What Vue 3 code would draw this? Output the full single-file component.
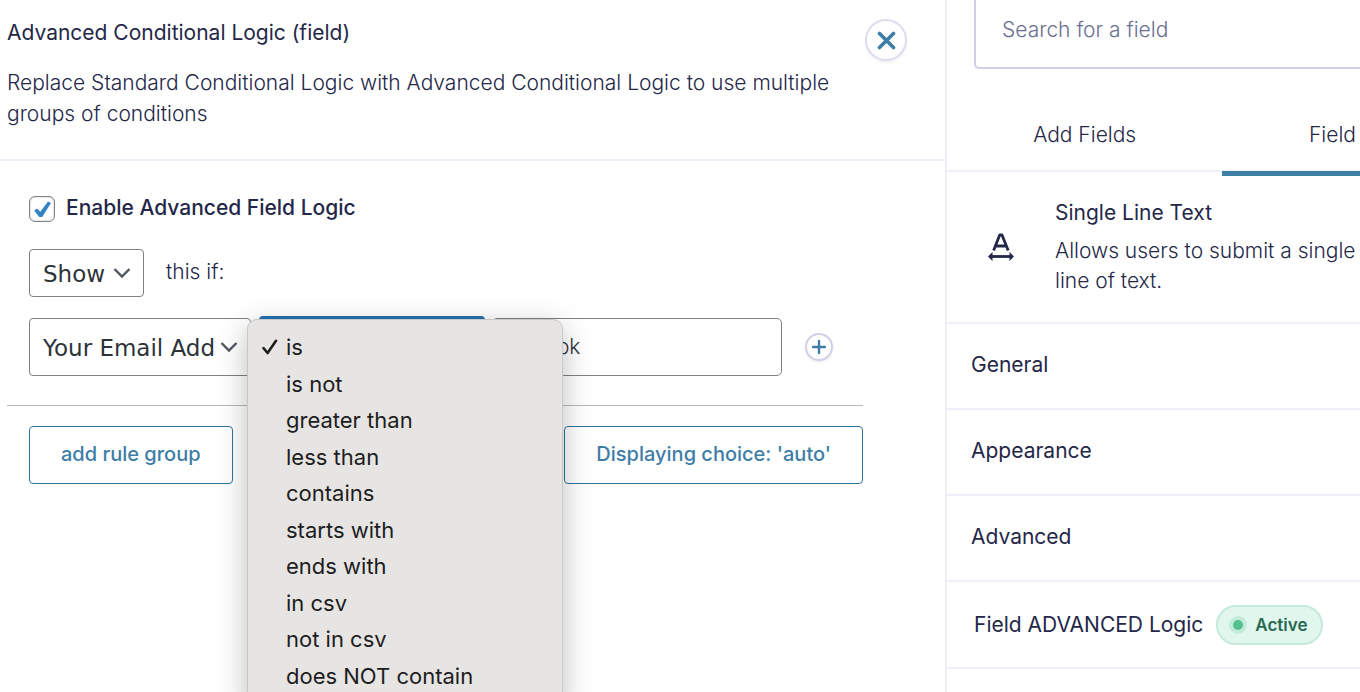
<script setup>
import { ref } from 'vue'

const enabled = ref(true)
const action = ref('Show')
const field = ref('Your Email Add')
const operator = ref('is')
const value = ref('Outlook')
const search = ref('')

const operators = [
  'is',
  'is not',
  'greater than',
  'less than',
  'contains',
  'starts with',
  'ends with',
  'in csv',
  'not in csv',
  'does NOT contain',
]
const sections = ['General', 'Appearance', 'Advanced']
</script>

<template>
  <div class="page">
    <main class="panel">
      <header class="head">
        <div class="intro">
          <h1 class="title">Advanced Conditional Logic (field)</h1>
          <p class="desc">
            Replace Standard Conditional Logic with Advanced Conditional Logic to use multiple groups of conditions
          </p>
        </div>
        <button class="close" type="button" aria-label="Close">
          <svg width="19" height="19" viewBox="0 0 19 19" aria-hidden="true">
            <path d="M2.5 2.5L16.5 16.5M16.5 2.5L2.5 16.5" stroke="#3e7da6" stroke-width="3.6" stroke-linecap="round" />
          </svg>
        </button>
      </header>

      <div class="body">
        <div class="row enable">
          <span class="tick">
            <input id="enable" v-model="enabled" class="box" type="checkbox" />
            <svg v-if="enabled" class="mark" width="19" height="19" viewBox="0 0 19 19" aria-hidden="true">
              <path d="M1.2 10.6L4 8.4L7.3 11.8L15 1.6L18 3L9.2 17H6.2Z" fill="#3582c4" />
            </svg>
          </span>
          <label class="enable-label" for="enable">Enable Advanced Field Logic</label>
        </div>

        <div class="row show">
          <span class="picker action">
            <select id="action" v-model="action" class="select">
              <option>Show</option>
              <option>Hide</option>
            </select>
            <svg class="chevron" width="18" height="12" viewBox="0 0 18 12" aria-hidden="true">
              <path d="M1.5 2L9 9.5L16.5 2" fill="none" stroke="#50575e" stroke-width="2.4" />
            </svg>
          </span>
          <label class="if" for="action">this if:</label>
        </div>

        <div class="row rule">
          <span class="picker field">
            <select v-model="field" class="select" aria-label="Field">
              <option>Your Email Add</option>
            </select>
            <svg class="chevron" width="18" height="12" viewBox="0 0 18 12" aria-hidden="true">
              <path d="M1.5 2L9 9.5L16.5 2" fill="none" stroke="#50575e" stroke-width="2.4" />
            </svg>
          </span>
          <span class="picker operator">
            <select v-model="operator" class="select open" aria-label="Operator">
              <option v-for="o in operators" :key="o">{{ o }}</option>
            </select>
            <ul class="menu" role="listbox" aria-label="Operator">
              <li
                v-for="o in operators"
                :key="o"
                class="option"
                role="option"
                :aria-selected="o === operator"
                @click="operator = o"
              >
                <svg v-if="o === operator" class="check" width="16" height="16" viewBox="0 0 16 16" aria-hidden="true">
                  <path
                    d="M1.5 9.2L5.6 14L14 1.8"
                    fill="none"
                    stroke="#1d1d1d"
                    stroke-width="2.6"
                    stroke-linecap="round"
                    stroke-linejoin="round"
                  />
                </svg>
                {{ o }}
              </li>
            </ul>
          </span>
          <input v-model="value" class="value" type="text" aria-label="Value" />
          <button class="plus" type="button" aria-label="Add rule">
            <svg width="14" height="14" viewBox="0 0 14 14" aria-hidden="true">
              <path d="M7 1V13M1 7H13" stroke="#3e7da6" stroke-width="2.4" stroke-linecap="round" />
            </svg>
          </button>
        </div>

        <hr class="divider" />

        <div class="row actions">
          <button class="btn" type="button">add rule group</button>
          <button class="btn" type="button">Displaying choice: 'auto'</button>
        </div>
      </div>
    </main>

    <aside class="side">
      <input v-model="search" class="search" type="text" placeholder="Search for a field" aria-label="Search for a field" />
      <nav class="tabs">
        <button class="tab" type="button">Add Fields</button>
        <button class="tab active" type="button">Field</button>
      </nav>
      <section class="info">
        <svg class="info-icon" width="26" height="28" viewBox="0 0 26 28" aria-hidden="true">
          <g fill="none" stroke="#242748" stroke-width="2.8" stroke-linejoin="round">
            <path d="M5.6 17.5L11.7 2H14L20.2 17.5M8 13H18" />
            <path d="M3 23.5H23" />
          </g>
          <path d="M0 23.5L4.5 19V28ZM26 23.5L21.5 19V28Z" fill="#242748" />
        </svg>
        <div>
          <h2 class="info-title">Single Line Text</h2>
          <p class="info-desc">Allows users to submit a single line of text.</p>
        </div>
      </section>
      <button v-for="s in sections" :key="s" class="section" type="button">{{ s }}</button>
      <button class="section logic" type="button">
        Field ADVANCED Logic
        <span class="badge"><span class="dot"></span>Active</span>
      </button>
    </aside>
  </div>
</template>

<style>
body {
  background: #fff;
  overflow: hidden;
}
</style>

<style scoped>
.page {
  display: flex;
  min-height: 100vh;
  font-family: Inter, "Liberation Sans", sans-serif;
  font-size: 21px;
  font-weight: 300;
  color: #242748;
}
.page *,
.page *::after {
  box-sizing: border-box;
}
button,
input,
select {
  margin: 0;
  font: inherit;
  color: inherit;
}
h1,
h2,
p {
  margin: 0;
}
.panel {
  flex: 1;
  min-width: 0;
}
.head {
  display: flex;
  justify-content: space-between;
  gap: 24px;
  padding: 17px 38px 30px 7px;
  border-bottom: 2px solid #efeff9;
}
.title {
  margin-bottom: 18px;
  font-size: 21px;
  font-weight: 400;
  line-height: 32px;
}
.desc {
  line-height: 31px;
}
.close {
  display: grid;
  flex: none;
  place-items: center;
  width: 42px;
  height: 42px;
  margin-top: 2px;
  padding: 0;
  border: 2px solid #dcdcee;
  border-radius: 50%;
  background: #fff;
  box-shadow: 0 2px 3px rgba(36, 39, 72, 0.06);
}
.body {
  padding: 32px 82px 0 7px;
}
.row {
  display: flex;
  align-items: center;
  padding-left: 22px;
}
.enable {
  gap: 11px;
  height: 32px;
}
.tick {
  position: relative;
  display: flex;
}
.box {
  width: 26px;
  height: 26px;
  appearance: none;
  border: 1px solid #7e8186;
  border-radius: 6px;
  background: #fff;
  box-shadow: inset 0 0 2px rgba(0, 0, 0, 0.3);
}
.mark {
  position: absolute;
  top: 4px;
  left: 4px;
  pointer-events: none;
}
.enable-label,
.if {
  padding-bottom: 3px;
}
.enable-label {
  font-weight: 500;
}
.show {
  gap: 22px;
  margin-top: 24px;
}
.picker {
  position: relative;
  display: flex;
  flex: none;
}
.select {
  width: 100%;
  padding: 1px 13px 0;
  appearance: none;
  border: 1px solid #7e8186;
  border-radius: 4px;
  background: #fff;
  color: #2c3338;
  font-family: "DejaVu Sans", sans-serif;
  font-size: 23px;
  font-weight: 400;
}
.chevron {
  position: absolute;
  top: calc(50% - 6px);
  right: 13px;
  pointer-events: none;
}
.action {
  width: 115px;
  height: 48px;
}
.rule {
  margin-top: 21px;
  padding-right: 30px;
}
.field {
  width: 222px;
  height: 58px;
}
.operator {
  width: 226px;
  height: 62px;
  margin: -2px 7px -2px 8px;
}
.open {
  border: 4px solid #2271b1;
}
.menu {
  position: absolute;
  z-index: 2;
  top: 3px;
  left: -12px;
  display: flex;
  flex-direction: column;
  width: 316px;
  height: 396px;
  margin: 0;
  padding: 9px 0 20px;
  border: 1px solid #c9c8c8;
  border-radius: 10px;
  background: #e6e5e4;
  box-shadow: 0 8px 30px rgba(0, 0, 0, 0.26);
  color: #1d1d1d;
  font-size: 22px;
  font-weight: 400;
  list-style: none;
}
.option {
  display: flex;
  flex: 1;
  align-items: center;
  padding-left: 38px;
}
.check {
  width: 16px;
  margin: 0 8px 0 -24px;
}
.value {
  flex: 1;
  min-width: 0;
  height: 58px;
  padding: 0 12px 2px;
  border: 1px solid #7e8186;
  border-radius: 5px;
  background: #fff;
  color: #2c3338;
}
.plus {
  display: grid;
  flex: none;
  place-items: center;
  width: 28px;
  height: 28px;
  margin-left: 23px;
  padding: 0;
  border: 2px solid #d0d1e6;
  border-radius: 50%;
  background: #fff;
  box-shadow: 0 2px 2px rgba(36, 39, 72, 0.06);
}
.divider {
  height: 1px;
  margin: 29px 0 20px;
  border: 0;
  background: #b9b9bb;
}
.actions {
  justify-content: space-between;
}
.btn {
  height: 58px;
  padding: 0 31px 2px;
  border: 1px solid #2f749f;
  border-radius: 4px;
  background: #fff;
  color: #3e7da6;
  font-size: 20px;
  font-weight: 500;
}
.side {
  flex: none;
  width: 415px;
  border-left: 2px solid #efeff9;
}
.search {
  display: block;
  width: calc(100% - 27px);
  height: 69px;
  margin-left: 27px;
  padding: 0 0 9px 26px;
  border: solid #cfd0e4;
  border-width: 0 0 2px 2px;
  border-radius: 0 0 0 5px;
  background: #fff;
}
.search::placeholder {
  color: #686e8f;
  opacity: 1;
}
.tabs {
  display: grid;
  grid-template-columns: 2fr 1fr;
  height: 103px;
  border-bottom: 2px solid #efeff9;
}
.tab {
  position: relative;
  padding: 30px 0 0;
  border: 0;
  background: none;
}
.active {
  padding-right: 4px;
  text-align: right;
}
.active::after {
  position: absolute;
  right: 0;
  bottom: -6px;
  left: 0;
  height: 5px;
  background: #3e7da6;
  content: "";
}
.info {
  display: flex;
  align-items: center;
  gap: 41px;
  height: 152px;
  padding: 0 0 1px 41px;
  border-bottom: 2px solid #efeff9;
}
.info-icon {
  flex: none;
}
.info-title {
  margin-bottom: 8px;
  font-size: 21px;
  font-weight: 400;
  line-height: 30px;
}
.info-desc {
  line-height: 30px;
}
.section {
  display: flex;
  align-items: center;
  width: 100%;
  height: 86px;
  padding: 0 24px 3px;
  border: 0;
  border-bottom: 2px solid #efeff9;
  background: none;
  font-weight: 400;
}
.logic {
  gap: 13px;
  height: 87px;
  padding: 0 27px;
}
.badge {
  display: flex;
  align-items: center;
  gap: 8px;
  height: 40px;
  padding: 0 13px 0 11px;
  border: 2px solid #c4ebd9;
  border-radius: 20px;
  background: #e1f6ed;
  color: #276a52;
  font-size: 17px;
  font-weight: 600;
}
.dot {
  width: 18px;
  height: 18px;
  border: 4px solid #c4ebd9;
  border-radius: 50%;
  background: #52c08f;
}
</style>
